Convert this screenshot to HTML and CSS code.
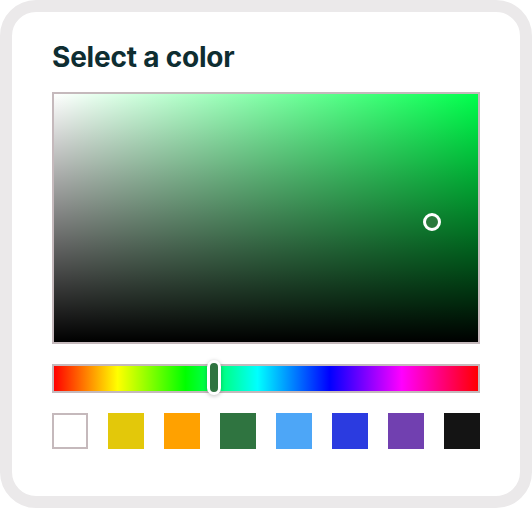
FILE: index.html
```html
<!DOCTYPE html>
<html lang="en">
<head>
<meta charset="utf-8">
<title>Select a color</title>
<link rel="stylesheet" href="styles.css">
</head>
<body>
<div class="card">
  <h1 class="title">Select a color</h1>
  <div class="sat">
    <div class="sat-white"></div>
    <div class="sat-black"></div>
    <div class="sat-handle"></div>
  </div>
  <div class="hue">
    <div class="hue-thumb"></div>
  </div>
  <div class="swatches">
    <div class="swatch swatch-white"></div>
    <div class="swatch" style="background:#e3c80a"></div>
    <div class="swatch" style="background:#ffa100"></div>
    <div class="swatch" style="background:#2f7440"></div>
    <div class="swatch" style="background:#4da6f7"></div>
    <div class="swatch" style="background:#2b3be0"></div>
    <div class="swatch" style="background:#7140b0"></div>
    <div class="swatch" style="background:#141414"></div>
  </div>
</div>
</body>
</html>
```

FILE: styles.css
```css
html, body {
  margin: 0;
  padding: 0;
  background: #ffffff;
}

.card {
  box-sizing: border-box;
  width: 532px;
  height: 508px;
  border: 12px solid #ebe9ea;
  border-radius: 36px;
  background: #ffffff;
  padding: 28px 40px 0 40px;
  display: flex;
  flex-direction: column;
}

.title {
  margin: 0;
  font-family: Inter, "Liberation Sans", sans-serif;
  font-weight: 700;
  font-size: 28px;
  line-height: 34px;
  color: #0e2d31;
  letter-spacing: -0.2px;
}

.sat {
  position: relative;
  margin-top: 18px;
  box-sizing: border-box;
  width: 428px;
  height: 252px;
  border: 2px solid #c5b9bc;
  background: #00ff4c;
}

.sat-white {
  position: absolute;
  inset: 0;
  background: linear-gradient(to right, #ffffff, rgba(255, 255, 255, 0));
}

.sat-black {
  position: absolute;
  inset: 0;
  background: linear-gradient(to top, #000000, rgba(0, 0, 0, 0));
}

.sat-handle {
  position: absolute;
  left: 369px;
  top: 119px;
  width: 18px;
  height: 18px;
  box-sizing: border-box;
  border: 3px solid #ffffff;
  border-radius: 50%;
  background: #2a7a3c;
}

.hue {
  position: relative;
  margin-top: 20px;
  box-sizing: border-box;
  width: 428px;
  height: 29px;
  border: 2px solid #c5b9bc;
  background: linear-gradient(to right,
    #ff0000 0%,
    #ffff00 15%,
    #00ff00 31%,
    #00ffff 48%,
    #0000ff 65%,
    #ff00ff 82%,
    #ff0000 100%);
}

.hue-thumb {
  position: absolute;
  left: 153px;
  top: -6px;
  width: 14px;
  height: 35px;
  box-sizing: border-box;
  border: 3px solid #ffffff;
  border-radius: 7px;
  background: #2f7440;
  box-shadow: 0 1px 4px rgba(0, 0, 0, 0.25);
}

.swatches {
  margin-top: 20px;
  width: 428px;
  display: flex;
  justify-content: space-between;
}

.swatch {
  width: 36px;
  height: 36px;
  box-sizing: border-box;
}

.swatch-white {
  background: #ffffff;
  border: 2px solid #c5b9bc;
}
```
